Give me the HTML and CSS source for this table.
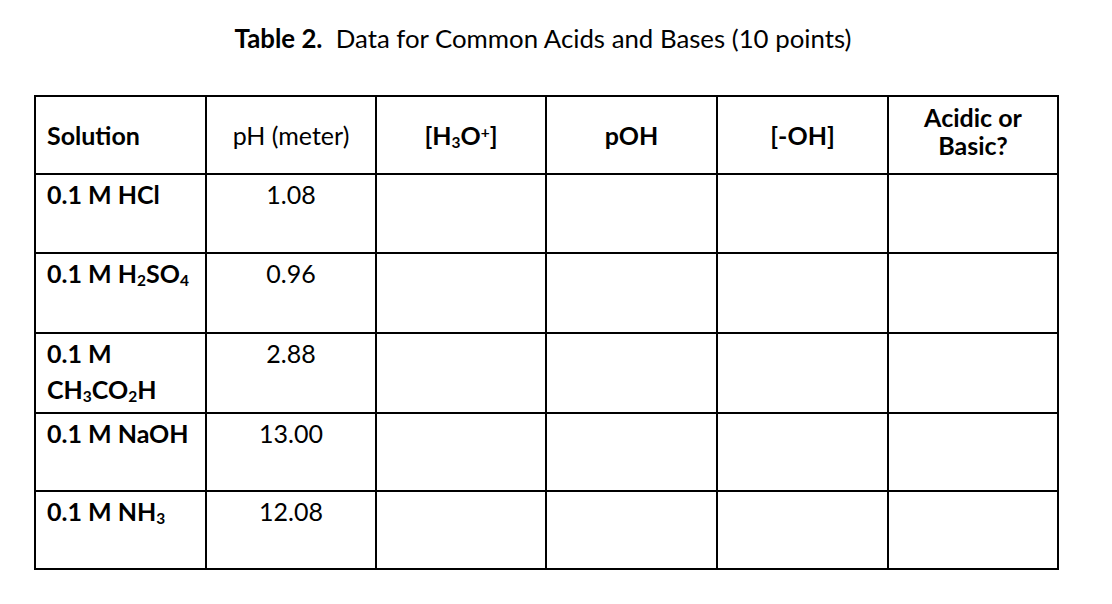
FILE: index.html
```html
<!DOCTYPE html>
<html lang="en">
<head>
<meta charset="utf-8">
<title>Table 2. Data for Common Acids and Bases</title>
<link rel="stylesheet" href="styles.css">
</head>
<body>
<div class="page">
  <h1 class="title"><b>Table 2.</b>&nbsp; Data for Common Acids and Bases (10 points)</h1>
  <table class="data">
    <colgroup>
      <col class="c1"><col class="c2"><col class="c3"><col class="c4"><col class="c5"><col class="c6">
    </colgroup>
    <thead>
      <tr class="head">
        <th class="left">Solution</th>
        <th class="normal">pH (meter)</th>
        <th>[H<sub>3</sub>O<sup>+</sup>]</th>
        <th>pOH</th>
        <th>[-OH]</th>
        <th class="raised">Acidic or<br>Basic?</th>
      </tr>
    </thead>
    <tbody>
      <tr class="r77">
        <td class="left">0.1 M HCl</td>
        <td>1.08</td><td></td><td></td><td></td><td></td>
      </tr>
      <tr class="r78">
        <td class="left">0.1 M H<sub>2</sub>SO<sub>4</sub></td>
        <td>0.96</td><td></td><td></td><td></td><td></td>
      </tr>
      <tr class="r78">
        <td class="left">0.1 M<br>CH<sub>3</sub>CO<sub>2</sub>H</td>
        <td>2.88</td><td></td><td></td><td></td><td></td>
      </tr>
      <tr>
        <td class="left">0.1 M NaOH</td>
        <td>13.00</td><td></td><td></td><td></td><td></td>
      </tr>
      <tr>
        <td class="left">0.1 M NH<sub>3</sub></td>
        <td>12.08</td><td></td><td></td><td></td><td></td>
      </tr>
    </tbody>
  </table>
</div>
</body>
</html>
```

FILE: styles.css
```css
html, body {
  margin: 0;
  padding: 0;
  background: #fff;
}

body {
  font-family: Lato, "Open Sans", "Liberation Sans", sans-serif;
  color: #000;
}

.page {
  width: 1023px;
  margin-left: 34px;
  padding-top: 20px;
}

.title {
  margin: 0;
  padding-right: 5px;
  text-align: center;
  font-size: 25.8px;
  font-weight: 400;
  line-height: 36px;
}

.title b {
  font-weight: 700;
}

.data {
  margin-top: 39px;
  width: 1023px;
  table-layout: fixed;
  border-collapse: collapse;
  font-size: 25px;
  line-height: 36px;
}

.c1 { width: 171px; }
.c2 { width: 170px; }
.c3 { width: 170px; }
.c4 { width: 171px; }
.c5 { width: 171px; }
.c6 { width: 170px; }

.data th,
.data td {
  border: 2px solid #000;
  padding: 0 4px;
  text-align: center;
}

.data tbody td {
  height: 75px;
  vertical-align: top;
  padding-top: 1px;
  font-weight: 400;
}

.data tbody tr.r77 td {
  height: 76px;
}

.data tbody tr.r78 td {
  height: 77px;
}

.data .head th {
  height: 76px;
  vertical-align: middle;
  font-weight: 700;
  line-height: 28px;
}

.data .head th.normal {
  font-weight: 400;
}

.data .head th.raised {
  padding-bottom: 8px;
  height: 68px;
}

.data .left {
  text-align: left;
  padding-left: 11px;
  font-weight: 700;
}

sub, sup {
  font-size: 0.62em;
  line-height: 0;
}

sub {
  vertical-align: -0.2em;
}

sup {
  vertical-align: 0.45em;
}
```
